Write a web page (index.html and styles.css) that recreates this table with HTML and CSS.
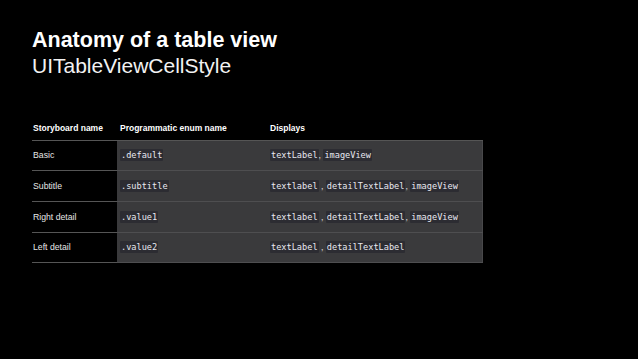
FILE: index.html
```html
<!DOCTYPE html>
<html lang="en">
<head>
  <meta charset="UTF-8" />
  <title>Anatomy of a table view</title>
  <link rel="stylesheet" href="styles.css">
</head>
<body>
  <div class="slide">
    <h1 class="title">Anatomy of a table view</h1>
    <h2 class="subtitle">UITableViewCellStyle</h2>

    <table class="styles-table">
      <thead>
        <tr>
          <th class="col-name">Storyboard name</th>
          <th class="col-enum">Programmatic enum name</th>
          <th class="col-shows">Displays</th>
        </tr>
      </thead>
      <tbody>
        <tr>
          <td class="col-name">Basic</td>
          <td class="col-enum"><code>.default</code></td>
          <td class="col-shows"><code>textLabel</code>, <code>imageView</code></td>
        </tr>
        <tr>
          <td class="col-name">Subtitle</td>
          <td class="col-enum"><code>.subtitle</code></td>
          <td class="col-shows"><code>textlabel</code> , <code>detailTextLabel</code>, <code>imageView</code></td>
        </tr>
        <tr>
          <td class="col-name">Right detail</td>
          <td class="col-enum"><code>.value1</code></td>
          <td class="col-shows"><code>textlabel</code> , <code>detailTextLabel</code>, <code>imageView</code></td>
        </tr>
        <tr>
          <td class="col-name">Left detail</td>
          <td class="col-enum"><code>.value2</code></td>
          <td class="col-shows"><code>textLabel</code> , <code>detailTextLabel</code></td>
        </tr>
      </tbody>
    </table>
  </div>
</body>
</html>
```

FILE: styles.css
```css
/* ===== Reset ===== */
* {
  margin: 0;
  padding: 0;
  box-sizing: border-box;
}
body {
  background: #000;
  font-family: 'Liberation Sans', Arial, sans-serif;
  color: #fff;
}

/* ===== Slide ===== */
.slide {
  width: 638px;
  height: 359px;
  padding: 27px 32px 0;
}
.title {
  font-size: 21.5px;
  font-weight: 700;
  line-height: 26px;
}
.subtitle {
  font-size: 21px;
  font-weight: 400;
  line-height: 26px;
  color: #f2f2f2;
}

/* ===== Table ===== */
.styles-table {
  margin-top: 40px;
  width: 451px;
  border-collapse: collapse;
  font-size: 8.7px;
  color: #e6e6e6;
}
.styles-table th {
  height: 21px;
  padding: 0 1px 3px;
  text-align: left;
  font-weight: 700;
  font-size: 8.5px;
  color: #fff;
  border-bottom: 1px solid #555;
}
.styles-table td {
  height: 30.7px;
  padding: 0 1px;
  border-bottom: 1px solid #555;
}
.col-name { width: 85px; }
.col-enum { width: 150px; padding-left: 3px !important; }
.col-shows { padding-left: 3px !important; }

.styles-table td.col-enum,
.styles-table td.col-shows {
  background: #3a3a3c;
  border-bottom-color: #4e4e50;
}
.styles-table td.col-shows {
  border-right: 1px solid #48484a;
}

code {
  font-family: 'DejaVu Sans Mono', monospace;
  font-size: 8.6px;
  color: #e8e8f0;
  background: #2c2c32;
  padding: 1px 1px;
  border-radius: 1px;
}
```
